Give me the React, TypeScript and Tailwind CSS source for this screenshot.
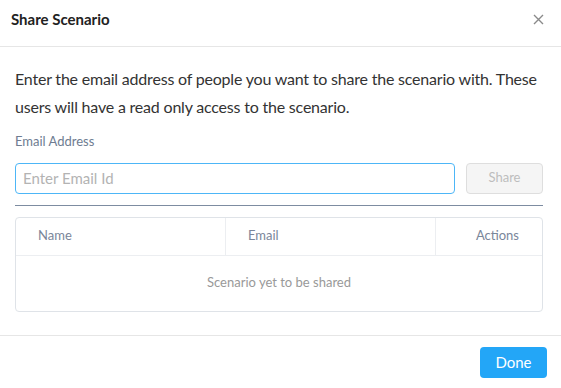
import React from 'react';

const App: React.FC = () => {
  return (
    <div className="w-[561px] h-[388px] bg-white flex flex-col font-['Lato',sans-serif]">
      {/* Header */}
      <div className="h-[47px] flex items-center justify-between pl-[11px] pr-[17px] pb-[7px] border-b border-[#e6e6e6]">
        <h3 className="text-[15px] font-bold text-[#222] leading-none">Share Scenario</h3>
        <button className="text-[#8a8a8a]">
          <svg width="11" height="11" viewBox="0 0 11 11" fill="none" stroke="currentColor" strokeWidth="1.4">
            <path d="M1 1l9 9M10 1l-9 9" />
          </svg>
        </button>
      </div>

      {/* Body */}
      <div className="flex-1 pl-[15px] pr-[18px] pt-[18px]">
        <p className="text-[16px] leading-[28px] tracking-[-0.2px] text-[#333]">
          Enter the email address of people you want to share the scenario with. These users will have a read only access to the scenario.
        </p>
        <label className="block mt-[11px] text-[13px] text-[#6e7c91]">Email Address</label>
        <div className="flex gap-[11px] mt-[11px]">
          <input
            className="flex-1 h-[31px] px-[7px] rounded-[4px] border border-[#4db6f7] text-[15px] text-[#333] placeholder:text-[#b3b3b3] outline-none"
            placeholder="Enter Email Id"
          />
          <button className="w-[77px] h-[31px] rounded-[4px] border border-[#dedede] bg-[#f5f5f5] text-[13px] text-[#bdbdbd]">
            Share
          </button>
        </div>
        <div className="mt-[11px] border-t border-[#7d8ca1]" />
        <div className="mt-[11px] border border-[#dfe3e8] rounded-[4px] overflow-hidden">
          <div className="grid grid-cols-[210px_210px_1fr] h-[38px] border-b border-[#eceef1] text-[13px] text-[#7a869a]">
            <div className="flex items-center pl-[22px] border-r border-[#eceef1]">Name</div>
            <div className="flex items-center pl-[22px] border-r border-[#eceef1]">Email</div>
            <div className="flex items-center justify-end pr-[23px]">Actions</div>
          </div>
          <div className="h-[55px] flex items-center justify-center text-[13px] text-[#999]">
            Scenario yet to be shared
          </div>
        </div>
      </div>

      {/* Footer */}
      <div className="h-[53px] border-t border-[#e6e6e6] flex items-start justify-end pt-[11px] pr-[14px]">
        <button className="w-[67px] h-[31px] rounded-[4px] bg-[#23a6f7] text-white text-[15px]">Done</button>
      </div>
    </div>
  );
};

export default App;
